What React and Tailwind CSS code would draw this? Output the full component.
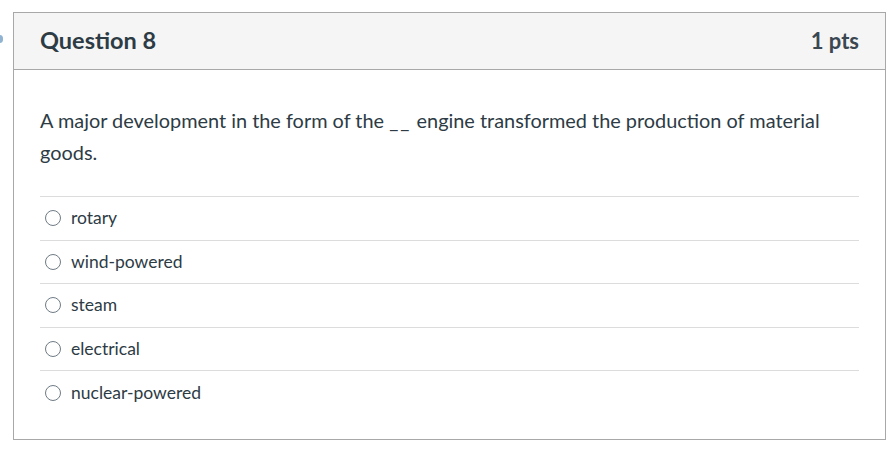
import React from "react";

const options = ["rotary", "wind-powered", "steam", "electrical", "nuclear-powered"];

export default function App() {
  return (
    <div
      className="relative w-[895px] h-[453px] bg-white text-[#2d3b45]"
      style={{ fontFamily: "Lato, 'Liberation Sans', sans-serif" }}
    >
      <div className="absolute left-[-4px] top-[35px] w-[7px] h-[8px] rounded-full bg-[#8fb3d1]" />
      <div className="pt-[12px] pl-[13px] w-[886px]">
        <div className="border border-[#a8a8a8] h-[428px]">
          <div className="h-[57px] bg-[#f5f5f5] border-b border-[#a8a8a8] flex items-center justify-between px-[26px]">
            <h2 className="text-[23.5px] font-bold leading-none">Question 8</h2>
            <div className="text-[22px] font-bold leading-none text-[#3b4751]">1 pts</div>
          </div>
          <div className="px-[26px] pt-[34px]">
            <p className="text-[19.9px] leading-[32px]">
              A major development in the form of the <span className="tracking-[2px]">__</span> engine transformed the production of material goods.
            </p>
            <div className="mt-[28px] border-t border-[#dcdcdc]">
              {options.map((o) => (
                <div key={o} className="h-[43.5px] flex items-center border-b border-[#dcdcdc] last:border-b-0 pl-[5px]">
                  <span className="w-[16px] h-[16px] rounded-full border-[1.5px] border-[#6f7b84] bg-white" />
                  <span className="ml-[10px] text-[17.5px]">{o}</span>
                </div>
              ))}
            </div>
          </div>
        </div>
      </div>
    </div>
  );
}
